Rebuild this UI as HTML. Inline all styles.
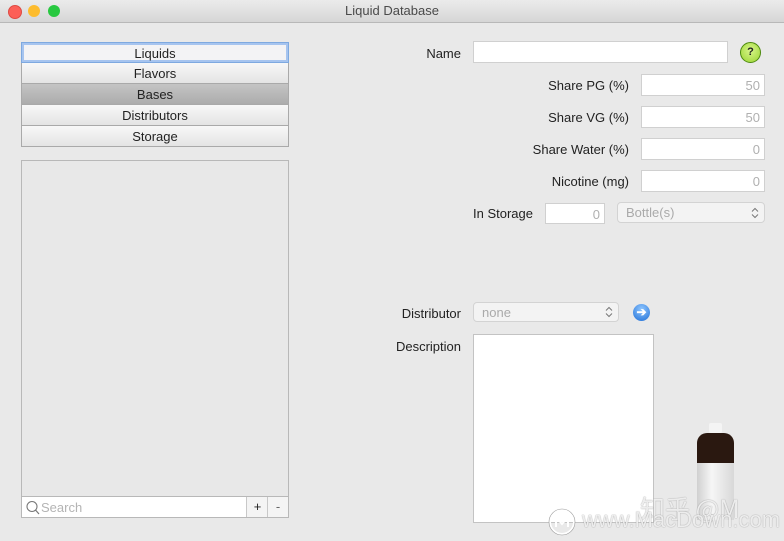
<!DOCTYPE html>
<html><head><style>
body{margin:0;width:784px;height:541px;background:#e9e9e9;font-family:"Liberation Sans",sans-serif;font-size:13px;color:#222;position:relative;overflow:hidden}
.a{position:absolute}
.tb{left:0;top:0;width:784px;height:22px;background:linear-gradient(#ebebeb,#d6d6d6);border-bottom:1px solid #b8b8b8;text-align:center;line-height:22px;color:#4a4a4a}
.dot{top:5px;width:12px;height:12px;border-radius:50%}
.seg{left:21px;width:266px;height:20px;border:1px solid #a9a9a9;border-top:none;background:linear-gradient(#f8f8f8,#e4e4e4);text-align:center;line-height:21px}
.in{background:#fff;border:1px solid #d0d0d0;box-sizing:border-box;text-align:right;color:#b0b0b0;padding-right:4px;line-height:21px}
.lb{text-align:right;line-height:23px}
.pop{background:#f3f3f3;border:1px solid #d3d3d3;border-radius:4px;box-sizing:border-box;color:#aaa;padding-left:8px;line-height:19px}
.chev{position:absolute;right:5px;top:4px}
</style></head><body>
<div class="a tb">Liquid Database</div>
<div class="a dot" style="left:8px;background:#fc5f57;border:0.5px solid #de4a43"></div>
<div class="a dot" style="left:28px;background:#fdbc2e"></div>
<div class="a dot" style="left:48px;background:#28c840"></div>

<div class="a seg" style="top:42px;border:1px solid #7ea9e0;height:19px;background:#f3f3f5;box-shadow:inset 0 0 0 2px #a6c4ef">Liquids</div>
<div class="a seg" style="top:63px">Flavors</div>
<div class="a seg" style="top:84px;background:linear-gradient(#c4c4c4,#acacac)">Bases</div>
<div class="a seg" style="top:105px">Distributors</div>
<div class="a seg" style="top:126px">Storage</div>

<div class="a" style="left:21px;top:160px;width:266px;height:336px;border:1px solid #b8b8b8;background:#e8e8e8"></div>
<div class="a" style="left:21px;top:496px;width:266px;height:20px;border:1px solid #b8b8b8;background:#fff"></div>
<div class="a" style="left:246px;top:497px;width:21px;height:20px;border-left:1px solid #c8c8c8;background:#f4f4f4;text-align:center;line-height:20px">+</div>
<div class="a" style="left:267px;top:497px;width:20px;height:20px;border-left:1px solid #c8c8c8;background:#f4f4f4;text-align:center;line-height:20px;color:#666">-</div>
<svg class="a" style="left:25px;top:500px" width="16" height="16"><circle cx="7" cy="6.5" r="5" fill="none" stroke="#777" stroke-width="1.1"/><path d="M10.5 10L14 14" stroke="#777" stroke-width="1.2"/></svg>
<div class="a" style="left:41px;top:499px;color:#b4b4b4;line-height:17px">Search</div>

<div class="a lb" style="left:380px;width:81px;top:42px">Name</div>
<div class="a in" style="left:473px;top:41px;width:255px;height:22px"></div>
<div class="a" style="left:740px;top:42px;width:19px;height:19px;border-radius:50%;background:radial-gradient(circle at 50% 40%,#d8f58a,#9ad432);border:1.5px solid #4d8a0e;text-align:center;line-height:19px;font-weight:bold;font-size:11px">?</div>

<div class="a lb" style="left:430px;width:199px;top:74px">Share PG (%)</div>
<div class="a in" style="left:641px;top:74px;width:124px;height:22px">50</div>
<div class="a lb" style="left:430px;width:199px;top:106px">Share VG (%)</div>
<div class="a in" style="left:641px;top:106px;width:124px;height:22px">50</div>
<div class="a lb" style="left:430px;width:199px;top:138px">Share Water (%)</div>
<div class="a in" style="left:641px;top:138px;width:124px;height:22px">0</div>
<div class="a lb" style="left:430px;width:199px;top:170px">Nicotine (mg)</div>
<div class="a in" style="left:641px;top:170px;width:124px;height:22px">0</div>
<div class="a lb" style="left:420px;width:113px;top:202px">In Storage</div>
<div class="a in" style="left:545px;top:203px;width:60px;height:21px;padding-right:4px">0</div>
<div class="a pop" style="left:617px;top:202px;width:148px;height:21px">Bottle(s)<svg class="chev" width="8" height="12"><path d="M1 4.5L4 1.5L7 4.5M1 7.5L4 10.5L7 7.5" fill="none" stroke="#777" stroke-width="1"/></svg></div>

<div class="a lb" style="left:360px;width:101px;top:302px">Distributor</div>
<div class="a pop" style="left:473px;top:302px;width:146px;height:20px">none<svg class="chev" width="8" height="12" style="top:3px"><path d="M1 4.5L4 1.5L7 4.5M1 7.5L4 10.5L7 7.5" fill="none" stroke="#777" stroke-width="1"/></svg></div>
<div class="a" style="left:633px;top:304px;width:17px;height:17px;border-radius:50%;background:radial-gradient(circle at 50% 30%,#8fc6ff,#1f6fd6);color:#fff;text-align:center;line-height:17px;font-size:12px;font-weight:bold">➔</div>
<div class="a lb" style="left:360px;width:101px;top:335px">Description</div>
<div class="a" style="left:473px;top:334px;width:179px;height:187px;background:#fff;border:1px solid #c3c3c3"></div>

<div class="a" style="left:709px;top:423px;width:13px;height:10px;background:#f4f4f4;border-radius:2px"></div>
<div class="a" style="left:697px;top:433px;width:37px;height:30px;background:#2a1810;border-radius:10px 10px 0 0"></div>
<div class="a" style="left:697px;top:463px;width:37px;height:57px;background:linear-gradient(90deg,#d0d0d0,#f6f6f6 40%,#d8d8d8)"></div>
<div class="a" style="left:640px;top:490px;color:rgba(255,255,255,.85);font-size:25px;font-family:'Noto Sans CJK SC',sans-serif;text-shadow:0 0 1px #777">知乎 @M</div>
<svg class="a" style="left:547px;top:507px" width="30" height="30"><circle cx="15" cy="15" r="12" fill="none" stroke="#fff" stroke-width="2"/><circle cx="15" cy="15" r="13" fill="none" stroke="#999" stroke-width=".6"/><path d="M9 20V10l6 7 6-7v10" fill="none" stroke="#fff" stroke-width="2"/></svg>
<div class="a" style="left:582px;top:507px;color:rgba(255,255,255,.85);font-size:22px;text-shadow:0 0 1px #777">www.MacDown.com</div>
</body></html>
